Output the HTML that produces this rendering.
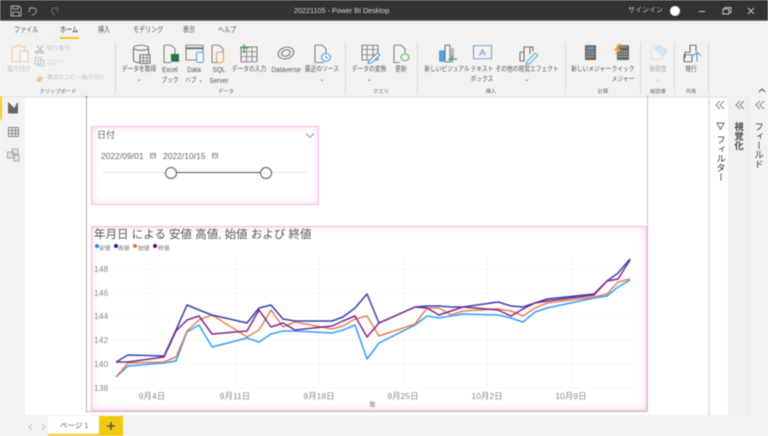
<!DOCTYPE html>
<html lang="ja"><head><meta charset="utf-8"><title>20221105 - Power BI Desktop</title>
<style>
*{box-sizing:border-box}
html,body{margin:0;padding:0;width:768px;height:436px;overflow:hidden;background:#fff}
body{font-family:"Liberation Sans","Noto Sans CJK JP",sans-serif;color:#444;position:relative}
#root{position:absolute;left:0;top:0;width:768px;height:436px;filter:blur(.5px);overflow:hidden}
.a{position:absolute;white-space:nowrap}
.c{position:absolute;text-align:center;white-space:nowrap;font-size:6.6px;line-height:9.5px;color:#555;transform:translateX(-50%) scaleX(.87)}
.c b{font-weight:normal;font-size:7.4px}
.c i{font-style:normal;font-size:6px}
.sep{position:absolute;top:42px;height:52px;width:1px;background:#dcdad8}
.g{position:absolute;top:88px;font-size:5.3px;line-height:8px;color:#666;transform:translateX(-50%);white-space:nowrap}
.tab{position:absolute;top:25px;font-size:7.6px;line-height:10px;color:#555;white-space:nowrap;transform:scaleX(.8);transform-origin:left}
svg{position:absolute;overflow:visible}
.v{position:absolute;writing-mode:vertical-rl;font-size:9.3px;line-height:12px;white-space:nowrap;color:#333}
.m{font-size:5.8px;color:#777;position:absolute;top:243px;white-space:nowrap}
.d{position:absolute;top:244px;width:4px;height:4px;border-radius:50%}
.yl,.xl{position:absolute;font-size:8.5px;color:#8a8a8a;white-space:nowrap}
.xl{top:390px;transform:translateX(-50%)}
.yl{left:94px}
.card{position:absolute;border:1px solid #f6b9e0;background:#fff;box-shadow:inset 0 0 8px #fbd5ef}
</style></head><body><div id="root">

<!-- title bar -->
<div class="a" style="left:0;top:0;width:768px;height:20px;background:#343231"></div>
<div class="a" style="left:0;top:20px;width:768px;height:1px;background:#777"></div>
<svg style="left:10px;top:5px" width="50" height="12" fill="none" stroke="#a8a6a4" stroke-width="1"><path d="M1 1h8l2 2v8H1zM3 1v3h5V1M3 11V7h6v4"/><path d="M20 3l-1 4M19 3h4c3 0 4 2 3 4s-3 3-4 3" /><path d="M47 3l1 4M48 3h-3c-3 0-4 2-3 4s2 3 3 3" stroke="#6c6a69"/></svg>
<div class="a" style="left:294px;top:6px;font-size:7.2px;line-height:9px;color:#d8d6d4">20221105 - Power BI Desktop</div>
<div class="a" style="left:628px;top:6px;font-size:7px;line-height:9px;color:#c8c6c4">サインイン</div>
<div class="a" style="left:670px;top:5.500px;width:10px;height:10px;border-radius:50%;background:#fff"></div>
<svg style="left:698px;top:5px" width="60" height="12" fill="none" stroke="#c8c6c4" stroke-width="1"><path d="M1 6.500h6"/><path d="M25 4h6v5h-6zM27 4V2.500h6v5h-2"/><path d="M50 3l6 6M56 3l-6 6"/></svg>

<!-- ribbon -->
<div class="a" style="left:0;top:21px;width:768px;height:75px;background:#f3f2f1"></div>
<div class="a" style="left:0;top:96px;width:768px;height:2px;background:#e8e7e5"></div>
<div class="tab" style="left:14px">ファイル</div>
<div class="tab" style="left:60px;color:#222">ホーム</div>
<div class="a" style="left:60px;top:37px;width:19px;height:2px;background:#f2c811"></div>
<div class="tab" style="left:98px">挿入</div>
<div class="tab" style="left:133px">モデリング</div>
<div class="tab" style="left:183px">表示</div>
<div class="tab" style="left:218px">ヘルプ</div>

<!-- ribbon icons -->
<svg style="left:0;top:40px" width="768" height="30" fill="none" stroke-width="1">
<g transform="scale(1,.87)">
<path d="M12 8h5v-2h4v2h4v6M12 8v17h8" stroke="#f3cfa8" stroke-width="1.200"/><rect x="20" y="13" width="8" height="12" stroke="#cfcdcb" fill="#f7f6f5"/>
<path d="M37 6l4 7M43 6l-4 7" stroke="#b5b3b1"/><circle cx="37" cy="14" r="1.500" stroke="#b5b3b1"/><circle cx="42" cy="14" r="1.500" stroke="#b5b3b1"/>
<path d="M35 20h6v8h-6zM38 23h6v7h-6z" stroke="#c8c6c4"/>
<ellipse cx="141" cy="9" rx="7.500" ry="3" stroke="#666"/><path d="M133.500 9v14c0 2 3 3 7 3M148.500 9v8" stroke="#666"/><rect x="140" y="17" width="10" height="10" fill="#f3f2f1" stroke="#666"/><path d="M140 20.500h10M140 24h10M143.500 17v10M147 17v10" stroke="#888"/>
<path d="M164 6h7l4 4v9M164 6v20h7" stroke="#777"/><rect x="171" y="16" width="8" height="9" fill="#1f7a3d"/>
<rect x="186" y="6" width="17" height="17" stroke="#777"/><path d="M186 9.500h17" stroke="#666" stroke-width="2"/><rect x="196.500" y="14" width="7" height="12" rx="2" fill="#f3f2f1" stroke="#4aa3df"/>
<path d="M212 6h7l4 4v5M212 6v20h7" stroke="#777"/><rect x="216.500" y="14" width="7" height="12" rx="2" fill="#f3f2f1" stroke="#e8954a"/>
<rect x="241" y="8" width="16" height="17" stroke="#777"/><path d="M241 13.500h16M241 19h16M246.500 8v17M252 8v17" stroke="#888"/><path d="M244 5v10M240 9h9" stroke="#3aa35a" stroke-width="1.300"/>
<ellipse cx="286" cy="15" rx="8" ry="6.500" stroke="#666" transform="rotate(-25 286 15)"/><ellipse cx="286" cy="15" rx="4.500" ry="3.500" stroke="#666" transform="rotate(-25 286 15)"/>
<path d="M315 6h7l4 4v9M315 6v20h9" stroke="#777"/><circle cx="326" cy="20" r="4.500" fill="#f3f2f1" stroke="#3a96dd"/><path d="M326 18v2.500h2" stroke="#3a96dd"/>
<rect x="362" y="6" width="16" height="17" stroke="#777"/><path d="M362 11h16M362 17h16M367 6v17M373 6v17" stroke="#888"/><path d="M369 24l8-9 3 2-8 9-4 1z" fill="#f3f2f1" stroke="#3a96dd"/>
<path d="M394 6h7l4 4v5M394 6v20h6" stroke="#777"/><circle cx="405" cy="20" r="4" stroke="#4caf50"/>
<rect x="439" y="12" width="6" height="13" fill="#4aa3df"/><rect x="445" y="6" width="5" height="19" stroke="#666"/><rect x="450" y="9" width="4" height="14" fill="#bbb"/><path d="M452 18v8M448 22h9" stroke="#3aa35a" stroke-width="1.300"/>
<rect x="473.500" y="6.500" width="18" height="15" stroke="#5b9bd5"/><text x="482.500" y="18" font-size="10" fill="#4a90d0" text-anchor="middle" font-family="Liberation Sans" stroke="none">A</text>
<path d="M520 14h4v10h-4zM524 24V8h6v8M530 8h3v5" stroke="#666"/><path d="M527 25l8-10 3 2-8 10-4 1z" fill="#f3f2f1" stroke="#4aa3df"/>
<rect x="585" y="6" width="11" height="17" fill="#666"/><rect x="587" y="8" width="7" height="3" fill="#4aa3df"/><path d="M586.500 13.500h8M586.500 16.500h8M586.500 19.500h8" stroke="#ddd" stroke-dasharray="1.500 1"/>
<rect x="617" y="6" width="12" height="17" fill="#666"/><path d="M620 8h7M618.500 13h9M618.500 16h9M618.500 19h9" stroke="#ddd" stroke-dasharray="1.500 1"/><path d="M619 4l-5 8h3l-2 6 6-8h-3l3-6z" fill="#f0a030"/>
<path d="M651 7h11v15h-11z" stroke="#cfe3f2"/><path d="M655 10l8 8 4-5-7-7z" fill="#d5e6f3" stroke="#c4dbec"/>
<path d="M685 21v-7h5v-8h6v7" stroke="#666"/><rect x="684" y="17" width="8" height="8" fill="none" stroke="#666"/><path d="M697 25V14M693 18l4-4 4 4" stroke="#3a96dd"/>
</g>
</svg>

<!-- ribbon labels -->
<div class="c" style="left:18.500px;top:65px;color:#bdbbb9">貼り付け</div>
<div class="a" style="left:47px;top:45px;font-size:5.8px;line-height:8px;color:#bdbbb9">切り取り</div>
<div class="a" style="left:46px;top:59px;font-size:5.8px;line-height:8px;color:#bdbbb9">コピー</div>
<div class="a" style="left:47px;top:74px;font-size:5.6px;line-height:8px;color:#bdbbb9">書式のコピー/貼り付け</div>
<svg style="left:35px;top:73px" width="10" height="10"><path d="M1 8l3-5 5 2-4 4z" fill="#e5c79b"/></svg>
<div class="c" style="left:139px;top:65px">データを取得<br><i>⌄</i></div>
<div class="c" style="left:170px;top:65px"><b>Excel</b><br>ブック</div>
<div class="c" style="left:194px;top:65px"><b>Data</b><br>ハブ ⌄</div>
<div class="c" style="left:219px;top:65px"><b>SQL</b><br><b>Server</b></div>
<div class="c" style="left:249px;top:65px">データの入力</div>
<div class="c" style="left:286px;top:65px"><b>Dataverse</b></div>
<div class="c" style="left:322px;top:65px">最近のソース<br><i>⌄</i></div>
<div class="c" style="left:369px;top:65px">データの変換<br><i>⌄</i></div>
<div class="c" style="left:401px;top:65px">更新</div>
<div class="c" style="left:447px;top:65px">新しいビジュアル</div>
<div class="c" style="left:482px;top:65px">テキスト<br>ボックス</div>
<div class="c" style="left:527px;top:65px">その他の視覚エフェクト<br><i>⌄</i></div>
<div class="c" style="left:591px;top:65px">新しいメジャー</div>
<div class="c" style="left:623px;top:65px">クイック<br>メジャー</div>
<div class="c" style="left:658px;top:65px;color:#aaa">秘密度<br><i>⌄</i></div>
<div class="c" style="left:691px;top:65px">発行</div>
<div class="g" style="left:58px">クリップボード</div>
<div class="g" style="left:226px">データ</div>
<div class="g" style="left:381px">クエリ</div>
<div class="g" style="left:491px">挿入</div>
<div class="g" style="left:603px">計算</div>
<div class="g" style="left:658px">秘密度</div>
<div class="g" style="left:691px">共有</div>
<div class="sep" style="left:115px"></div><div class="sep" style="left:345px"></div><div class="sep" style="left:417px"></div><div class="sep" style="left:565px"></div><div class="sep" style="left:640px"></div><div class="sep" style="left:674px"></div><div class="sep" style="left:708px"></div>
<svg style="left:758px;top:88px" width="8" height="6" fill="none" stroke="#555"><path d="M1 4l3-3 3 3"/></svg>

<!-- left rail -->
<div class="a" style="left:0;top:98px;width:25px;height:338px;background:#f3f2f1"></div>
<div class="a" style="left:0;top:96px;width:2px;height:24px;background:#f2c811"></div>
<svg style="left:6px;top:100px" width="16" height="70" fill="none" stroke="#888"><path d="M2.500 13V3l3 3 3 3 3-6v10z" fill="#666" stroke="#666"/><rect x="2.500" y="27.500" width="10" height="9"/><path d="M2.500 30.500h10M2.500 33.500h10M6 27.500v9M9.500 27.500v9"/><path d="M1.500 52h6v6h-6zM6 49h6v5h-6zM8 55h5v6H8z" stroke="#aaa" fill="#e4e3e1"/></svg>

<!-- page frame -->
<div class="a" style="left:86px;top:96px;height:316px;border-left:1px dotted #666;width:1px"></div>
<div class="a" style="left:647px;top:96px;height:316px;border-left:1px dotted #999;width:1px"></div>
<div class="a" style="left:86px;top:411px;width:562px;border-top:1px dotted #888"></div>

<!-- slicer card -->
<div class="card" style="left:91px;top:126px;width:228px;height:79px"></div>
<div class="a" style="left:97px;top:129px;font-size:9px;line-height:12px;color:#666">日付</div>
<svg style="left:305px;top:132px" width="10" height="7" fill="none" stroke="#999"><path d="M1 1.500l4 4 4-4"/></svg>
<div class="a" style="left:101px;top:151px;font-size:8.500px;line-height:10px;color:#666">2022/09/01</div>
<div class="a" style="left:163px;top:151px;font-size:8.500px;line-height:10px;color:#666">2022/10/15</div>
<svg style="left:150px;top:152px" width="70" height="7" fill="none" stroke="#999"><path d="M.5 1.500h5v4h-5zM.5 3h5M62.500 1.500h5v4h-5zM62.500 3h5"/></svg>
<div class="a" style="left:103px;top:172px;width:206px;height:1px;background:#e8e8e8"></div>
<div class="a" style="left:171px;top:172px;width:95px;height:1px;background:#555"></div>
<div class="a" style="left:165px;top:167px;width:12px;height:12px;border-radius:50%;background:#fff;border:1px solid #555"></div>
<div class="a" style="left:260px;top:167px;width:12px;height:12px;border-radius:50%;background:#fff;border:1px solid #555"></div>

<!-- chart card -->
<div class="card" style="left:91px;top:226px;width:556px;height:185px"></div>
<div class="a" style="left:94px;top:228px;font-size:11.500px;line-height:14px;color:#555">年月日 による 安値 高値, 始値 および 終値</div>
<i class="d" style="left:94.500px;background:#118dff"></i><span class="m" style="left:99px">安値</span>
<i class="d" style="left:113.500px;background:#12239e"></i><span class="m" style="left:118px">高値</span>
<i class="d" style="left:133px;background:#e66c37"></i><span class="m" style="left:138px">始値</span>
<i class="d" style="left:153px;background:#6b007b"></i><span class="m" style="left:158px">終値</span>

<div class="yl" style="top:264px">148</div><div class="yl" style="top:288px">146</div><div class="yl" style="top:311px">144</div><div class="yl" style="top:335px">142</div><div class="yl" style="top:359px">140</div><div class="yl" style="top:383px">138</div>
<div class="xl" style="left:152px">9月4日</div><div class="xl" style="left:235px">9月11日</div><div class="xl" style="left:319px">9月18日</div><div class="xl" style="left:403px">9月25日</div><div class="xl" style="left:487px">10月2日</div><div class="xl" style="left:571px">10月9日</div>
<div class="a" style="left:369px;top:400px;font-size:7px;color:#666">年</div>

<svg style="left:0;top:0" width="768" height="436" fill="none">
<g stroke="#e6e6e6" stroke-dasharray="1 3">
<path d="M112 269H636M112 293H636M112 316.500H636M112 340H636M112 364H636M112 388H636"/>
<path d="M152 256V388M235 256V388M319 256V388M403 256V388M487 256V388M571 256V388"/>
</g>
<g stroke-width="1.500" stroke-linejoin="round" opacity=".85">
<polyline stroke="#118dff" points="116,377 128,366 164,363 176,361 187,332 199,325 212,347 247,338 259,342 271,334 283,331 295,331 332,333 343,330 355,325 367,359 379,343 415,325 427,316 439,318 451,316 463,314 498,315 511,318 523,322 535,312 547,308 594,298 607,296 618,287 630,280"/>
<polyline stroke="#e66c37" points="116,377 128,363 164,362 176,357 187,331 199,320 212,315 247,337 259,330 271,310 283,327 295,322 332,329 343,326 355,319 367,316 379,336 415,324 427,308 439,308 451,315 463,311 498,309 511,311 523,316 535,308 547,303 594,297 607,294 618,282 630,279"/>
<polyline stroke="#12239e" points="116,362 128,355 164,356 176,330 187,305 199,310 212,315 247,323 259,308 271,305 283,319 295,321 332,321 343,317 355,308 367,294 379,323 415,307 427,306 439,306 451,307 463,307 498,302 511,306 523,307 535,303 547,299 594,294 607,281 618,273 630,259"/>
<polyline stroke="#6b007b" points="116,362 128,362 164,357 176,331 187,320 199,316 212,334 247,331 259,310 271,327 283,323 295,330 332,326 343,321 355,316 367,337 379,323 415,307 427,308 439,315 451,311 463,307 498,310 511,316 523,309 535,303 547,301 594,295 607,281 618,279 630,260"/>
</g>
</svg>

<!-- right panes -->
<div class="a" style="left:708px;top:96px;width:2px;height:320px;background:#e8e7e5"></div>
<div class="a" style="left:728px;top:96px;width:20px;height:340px;background:#f1f0ee"></div>
<div class="a" style="left:748px;top:96px;width:20px;height:340px;background:#f3f2f1;border-left:1px solid #e9e8e6"></div>
<svg style="left:715px;top:100px" width="50" height="10" fill="none" stroke="#888"><path d="M5 1L1 5l4 4M9 1L5 5l4 4M25 1l-4 4 4 4M29 1l-4 4 4 4M45 1l-4 4 4 4M49 1l-4 4 4 4"/></svg>
<svg style="left:716px;top:122px" width="9" height="9" fill="none" stroke="#666"><path d="M1 1h7L4.500 7.500z"/></svg>
<div class="v" style="left:714px;top:135px">フィルター</div>
<div class="v" style="left:732px;top:122px;font-weight:bold;color:#444">視覚化</div>
<div class="v" style="left:752px;top:122px">フィールド</div>

<!-- bottom -->
<div class="a" style="left:25px;top:415px;width:703px;height:21px;background:#f3f2f1"></div>
<div class="a" style="left:0;top:416px;width:768px;height:20px;background:#f3f2f1"></div>
<svg style="left:28px;top:423px" width="20" height="8" fill="none" stroke="#c8c6c4"><path d="M4 1L1 4l3 3M14 1l3 3-3 3"/></svg>
<div class="a" style="left:48px;top:416px;width:51px;height:20px;background:#fff;border-bottom:2px solid #f2c811"></div>
<div class="a" style="left:60px;top:421px;font-size:7.500px;line-height:10px;color:#666">ページ 1</div>
<div class="a" style="left:99px;top:416px;width:24px;height:20px;background:#f2c811"></div>
<svg style="left:106px;top:421px" width="10" height="10" stroke="#555" stroke-width="1.500"><path d="M5 1v8M1 5h8"/></svg>
</div></body></html>
